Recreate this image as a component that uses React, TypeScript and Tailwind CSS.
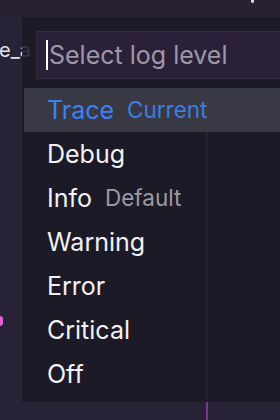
import React from "react";

const items: { label: string; tag?: string; active?: boolean }[] = [
  { label: "Trace", tag: "Current", active: true },
  { label: "Debug" },
  { label: "Info", tag: "Default" },
  { label: "Warning" },
  { label: "Error" },
  { label: "Critical" },
  { label: "Off" },
];

export default function App() {
  return (
    <div
      className="relative w-[280px] h-[420px] overflow-hidden bg-[#272236]"
      style={{ fontFamily: "Inter, 'Noto Sans', sans-serif" }}
    >
      {/* background */}
      <div className="h-[17px] bg-[#282134] flex justify-end pr-[26px]">
        <div className="w-[3px] h-[3px] bg-[#d8d4dc] rounded-b-sm" />
      </div>
      <div className="h-[71px] flex items-start">
        <div className="mt-[23px] -ml-[1px] text-[20px] leading-none text-[#e4e2e8] whitespace-nowrap">
          e_a
        </div>
      </div>
      <div className="flex h-[332px]">
        <div className="w-[206px] flex flex-col">
          <div className="mt-[228px] w-[3px] h-[10px] rounded-r-full bg-[#e35fd9]" />
        </div>
        <div className="w-[2px] bg-[#7a3a8a]" />
        <div className="flex-1" />
      </div>

      {/* popup */}
      <div className="absolute left-[22px] top-[17px] w-[300px] h-[385px] bg-[#1b1a24]/[0.86] flex flex-col">
        <div className="mt-[14px] ml-[14px] h-[48px] bg-[#2a2038] border border-[#332c3f] flex items-center pl-[9px]">
          <div className="w-[2px] h-[30px] bg-white" />
          <span className="ml-[1px] text-[25px] text-[#9e98a6] leading-none">Select log level</span>
        </div>
        <div className="mt-[9px] ml-[2px] flex flex-col">
          {items.map((it) => (
            <div
              key={it.label}
              className={
                "h-[44px] flex items-center pl-[23px] " +
                (it.active ? "bg-[#3b3a47]/[0.95]" : "")
              }
            >
              <span
                className={
                  "text-[25px] leading-none " +
                  (it.active ? "text-[#3d82f2]" : "text-[#f2f1f4]")
                }
              >
                {it.label}
              </span>
              {it.tag && (
                <span
                  className={
                    "ml-[13px] text-[22.5px] leading-none " +
                    (it.active ? "text-[#3f7ddf]" : "text-[#9c9aa2]")
                  }
                >
                  {it.tag}
                </span>
              )}
            </div>
          ))}
        </div>
      </div>
    </div>
  );
}
